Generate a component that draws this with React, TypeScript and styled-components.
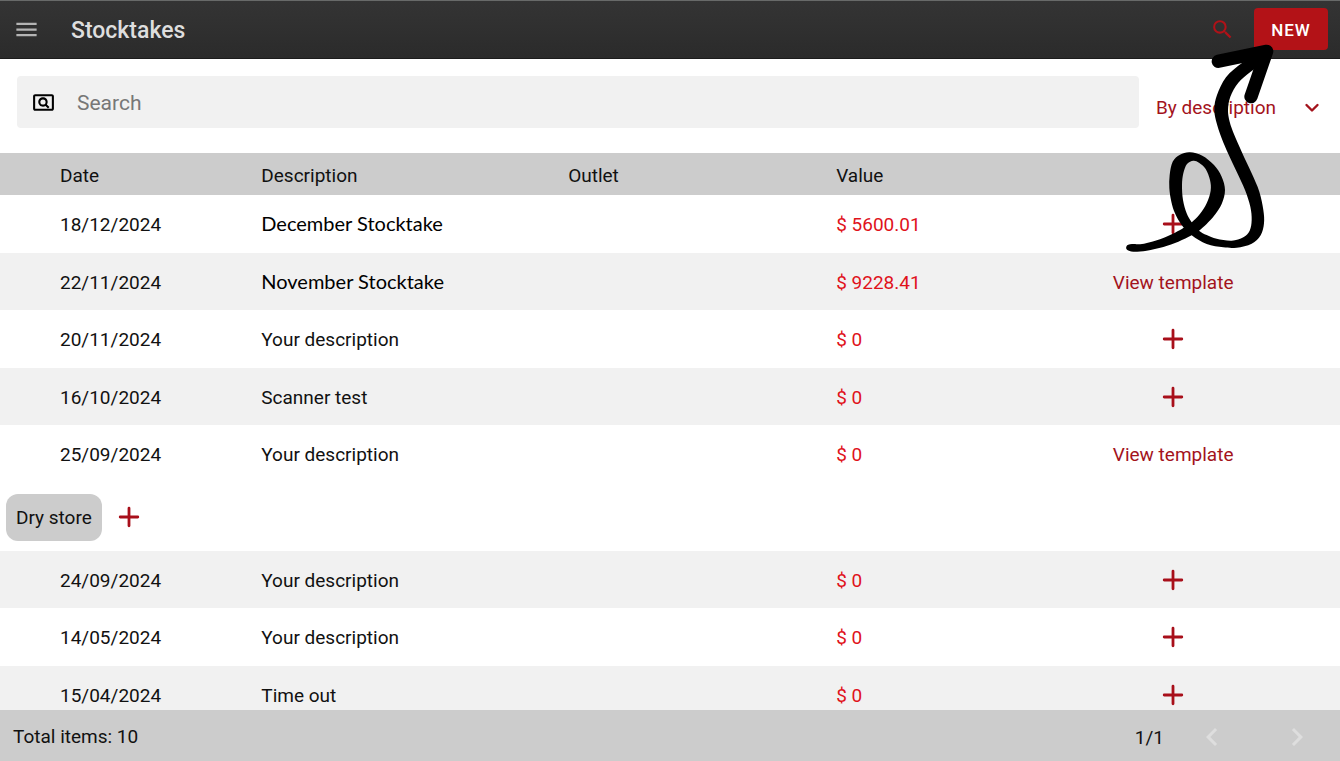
import React from "react";
import styled, { createGlobalStyle, css } from "styled-components";
import {
  MdMenu,
  MdSearch,
  MdOutlinePageview,
  MdChevronLeft,
  MdChevronRight,
} from "react-icons/md";

const GlobalStyle = createGlobalStyle`
  *, *::before, *::after { box-sizing: border-box; }
  body {
    margin: 0;
    background: #fff;
    color: #111;
    font-family: Roboto, "Liberation Sans", sans-serif;
    font-size: 19px;
    line-height: 24px;
  }
  button, input, select { font: inherit; color: inherit; }
`;

const Page = styled.div`
  position: relative;
  display: flex;
  flex-direction: column;
  height: 100vh;
  overflow: hidden;
`;

const TopBar = styled.header`
  display: flex;
  align-items: center;
  flex: none;
  height: 59px;
  padding: 0 12px;
  background: linear-gradient(#343434, #2b2b2b);
  border-top: 1px solid #686a69;
  border-bottom: 1px solid #1c1c1c;
`;

const IconButton = styled.button`
  display: inline-flex;
  align-items: center;
  justify-content: center;
  padding: 0;
  border: 0;
  background: none;
  cursor: pointer;
`;

const MenuButton = styled(IconButton)`
  width: 28px;
  height: 40px;
  color: #b4b4b4;
`;

const Title = styled.h1`
  flex: 1;
  margin: 0 0 0 31px;
  padding-top: 3px;
  color: #dedede;
  font-size: 23px;
  font-weight: 500;
  line-height: 28px;
`;

const SearchToggle = styled(IconButton)`
  width: 40px;
  height: 40px;
  margin-right: 12px;
  color: #b01218;
`;

const NewButton = styled.button`
  width: 74px;
  height: 42px;
  margin-bottom: 1px;
  padding: 2px 0 0;
  border: 0;
  border-radius: 4px;
  background: #b31217;
  color: #fff;
  font-size: 17px;
  font-weight: 500;
  letter-spacing: 1px;
  cursor: pointer;
`;

const Filters = styled.form`
  display: flex;
  align-items: center;
  flex: none;
  gap: 17px;
  height: 94px;
  padding: 0 17px 8px;
`;

const SearchField = styled.label`
  display: flex;
  align-items: center;
  flex: 1;
  gap: 21px;
  height: 52px;
  padding: 0 14px;
  border-radius: 4px;
  background: #f1f1f1;
  color: #000;
`;

const SearchInput = styled.input`
  flex: 1;
  min-width: 0;
  padding: 2px 0 0;
  border: 0;
  outline: 0;
  background: none;
  font-size: 21px;
  &::placeholder { color: #777; opacity: 1; }
`;

const SortField = styled.label`
  display: flex;
  align-items: center;
  width: 167px;
  padding: 12px 3px 0 0;
  color: #a3131c;
`;

const SortSelect = styled.select`
  flex: 1;
  min-width: 0;
  padding: 0;
  border: 0;
  outline: 0;
  appearance: none;
  background: none;
`;

const TableArea = styled.main`
  flex: 1;
  min-height: 0;
  overflow-y: auto;
  scrollbar-width: none;
`;

const Table = styled.table`
  width: 100%;
  border-collapse: collapse;
  table-layout: fixed;
`;

const Col = styled.col<{ $share: string }>`
  width: ${(p) => p.$share};
`;

const HeadCell = styled.th<{ $first?: boolean }>`
  height: 42px;
  padding: 4px 0 0 ${(p) => (p.$first ? "60px" : "0")};
  background: #ccc;
  font-weight: 400;
  text-align: left;
`;

const Row = styled.tr<{ $shaded: boolean }>`
  height: ${(p) => (p.$shaded ? "57px" : "58px")};
  background: ${(p) => (p.$shaded ? "#f1f1f1" : "#fff")};
`;

const Cell = styled.td<{ $kind?: "date" | "value" | "action" }>`
  padding: 2px 0 0;
  ${(p) => p.$kind === "date" && css`padding-left: 60px;`}
  ${(p) => p.$kind === "value" && css`color: #e0121b;`}
  ${(p) => p.$kind === "action" && css`padding-top: 0; text-align: center;`}
`;

const NamedDescription = styled.span`
  display: block;
  padding-bottom: 4px;
  color: #000;
  font-family: Lato, "Liberation Sans", sans-serif;
  font-size: 20px;
`;

const TemplateLink = styled.a`
  display: inline-block;
  padding-top: 2px;
  color: #a3131c;
  text-decoration: none;
`;

const AddButton = styled(IconButton)`
  width: 32px;
  height: 32px;
  color: #a80f1a;
  vertical-align: middle;
`;

const TagCell = styled.td`
  height: 68px;
  padding: 0 6px;
`;

const TagList = styled.div`
  display: flex;
  align-items: center;
  gap: 11px;
`;

const Tag = styled.span`
  padding: 12px 10px 11px;
  border-radius: 12px;
  background: #ccc;
`;

const Footer = styled.footer`
  display: flex;
  align-items: center;
  flex: none;
  height: 51px;
  padding: 2px 25px 0 13px;
  background: #ccc;
`;

const Total = styled.span`
  flex: 1;
`;

const Pager = styled.nav`
  display: flex;
  align-items: center;
`;

const PageNumber = styled.span`
  margin-right: 30px;
  padding-top: 2px;
`;

const PagerButton = styled(IconButton)`
  width: 36px;
  height: 36px;
  color: #dedede;
  & + & { margin-left: 49px; }
`;

const Arrow = styled.svg`
  position: absolute;
  top: 0;
  right: 0;
  width: 240px;
  height: 270px;
  pointer-events: none;
`;

type Point = [number, number];

/* Closed Catmull-Rom outline through the given points. */
function outline(points: Point[]): string {
  const n = points.length;
  const at = (i: number) => points[(i + n) % n];
  let d = `M${at(0).join(" ")}`;
  for (let i = 0; i < n; i++) {
    const [a, b, c, e] = [at(i - 1), at(i), at(i + 1), at(i + 2)];
    d += ` C${b[0] + (c[0] - a[0]) / 6} ${b[1] + (c[1] - a[1]) / 6} ${c[0] - (e[0] - b[0]) / 6} ${c[1] - (e[1] - b[1]) / 6} ${c[0]} ${c[1]}`;
  }
  return d + "Z";
}

const ribbon = outline([
  /* inner edge: down the shaft, round the loop, out to the tail */
  [470, 165], [425, 190], [378, 232], [351, 285], [343, 325], [348, 362],
  [365, 415], [385, 462], [410, 515], [435, 570], [451, 620], [455, 660],
  [449, 692], [430, 712], [395, 722], [350, 716], [320, 705], [297, 692],
  [276, 668], [260, 640], [249, 600], [246, 555], [250, 520], [261, 492],
  [280, 482], [297, 488], [317, 507], [330, 540], [332, 572], [320, 610],
  [299, 643], [273, 669], [250, 684], [225, 698], [180, 718], [132, 731],
  [90, 733],
  /* outer edge: back from the tail, round the loop, up the shaft */
  [79, 740], [82, 750], [100, 755], [140, 752], [190, 741], [235, 725],
  [275, 706], [300, 690], [340, 650], [365, 612], [375, 570], [365, 530],
  [342, 495], [307, 467], [270, 457], [240, 464], [218, 485], [209, 525],
  [208, 565], [214, 605], [225, 640], [245, 675], [275, 706], [320, 732],
  [370, 742], [410, 743], [455, 731], [482, 706], [492, 670], [490, 630],
  [478, 575], [455, 520], [425, 455], [403, 405], [389, 365], [384, 330],
  [391, 290], [415, 248], [452, 215], [490, 190],
]);

const PlusIcon = () => (
  <svg width="22" height="22" viewBox="0 0 22 22" fill="none" stroke="currentColor" strokeWidth="2.8" strokeLinecap="round" aria-hidden="true">
    <path d="M11 2.2V19.8M2.2 11H19.8" />
  </svg>
);

const ChevronDown = () => (
  <svg width="16" height="12" viewBox="0 0 16 12" fill="none" stroke="currentColor" strokeWidth="2.4" strokeLinecap="round" strokeLinejoin="round" aria-hidden="true">
    <path d="M2.5 3L8 8.5L13.5 3" />
  </svg>
);

interface Stocktake {
  date: string;
  description: string;
  named?: boolean;
  value: string;
  template?: boolean;
  tag?: string;
}

const stocktakes: Stocktake[] = [
  { date: "18/12/2024", description: "December Stocktake", named: true, value: "$ 5600.01" },
  { date: "22/11/2024", description: "November Stocktake", named: true, value: "$ 9228.41", template: true },
  { date: "20/11/2024", description: "Your description", value: "$ 0" },
  { date: "16/10/2024", description: "Scanner test", value: "$ 0" },
  { date: "25/09/2024", description: "Your description", value: "$ 0", template: true, tag: "Dry store" },
  { date: "24/09/2024", description: "Your description", value: "$ 0" },
  { date: "14/05/2024", description: "Your description", value: "$ 0" },
  { date: "15/04/2024", description: "Time out", value: "$ 0" },
];

export default function App() {
  return (
    <>
      <GlobalStyle />
      <Page>
        <TopBar>
          <MenuButton type="button" aria-label="Menu"><MdMenu size={27} /></MenuButton>
          <Title>Stocktakes</Title>
          <SearchToggle type="button" aria-label="Search"><MdSearch size={25} /></SearchToggle>
          <NewButton type="button">NEW</NewButton>
        </TopBar>
        <Filters onSubmit={(e) => e.preventDefault()}>
          <SearchField>
            <MdOutlinePageview size={25} />
            <SearchInput type="text" placeholder="Search" aria-label="Search" />
          </SearchField>
          <SortField>
            <SortSelect aria-label="Sort" defaultValue="description">
              <option value="description">By description</option>
            </SortSelect>
            <ChevronDown />
          </SortField>
        </Filters>
        <TableArea>
          <Table>
            <colgroup>
              <Col $share="19.5%" />
              <Col $share="22.9%" />
              <Col $share="20%" />
              <Col $share="12.7%" />
              <Col $share="24.9%" />
            </colgroup>
            <thead>
              <tr>
                <HeadCell $first>Date</HeadCell>
                <HeadCell>Description</HeadCell>
                <HeadCell>Outlet</HeadCell>
                <HeadCell>Value</HeadCell>
                <HeadCell />
              </tr>
            </thead>
            <tbody>
              {stocktakes.map((s, i) => (
                <React.Fragment key={s.date}>
                  <Row $shaded={i % 2 === 1}>
                    <Cell $kind="date">{s.date}</Cell>
                    <Cell>{s.named ? <NamedDescription>{s.description}</NamedDescription> : s.description}</Cell>
                    <Cell />
                    <Cell $kind="value">{s.value}</Cell>
                    <Cell $kind="action">
                      {s.template ? (
                        <TemplateLink href="#template">View template</TemplateLink>
                      ) : (
                        <AddButton type="button" aria-label="Add"><PlusIcon /></AddButton>
                      )}
                    </Cell>
                  </Row>
                  {s.tag && (
                    <tr>
                      <TagCell colSpan={5}>
                        <TagList>
                          <Tag>{s.tag}</Tag>
                          <AddButton type="button" aria-label="Add"><PlusIcon /></AddButton>
                        </TagList>
                      </TagCell>
                    </tr>
                  )}
                </React.Fragment>
              ))}
            </tbody>
          </Table>
        </TableArea>
        <Footer>
          <Total>Total items: 10</Total>
          <Pager>
            <PageNumber>1/1</PageNumber>
            <PagerButton type="button" aria-label="Previous"><MdChevronLeft size={36} /></PagerButton>
            <PagerButton type="button" aria-label="Next"><MdChevronRight size={36} /></PagerButton>
          </Pager>
        </Footer>
        <Arrow viewBox="0 0 720 810" aria-hidden="true">
          <path d={ribbon} />
          <path d="M355 184L500 154L453 290" fill="none" stroke="#000" strokeWidth="40" strokeLinecap="round" strokeLinejoin="round" />
        </Arrow>
      </Page>
    </>
  );
}
